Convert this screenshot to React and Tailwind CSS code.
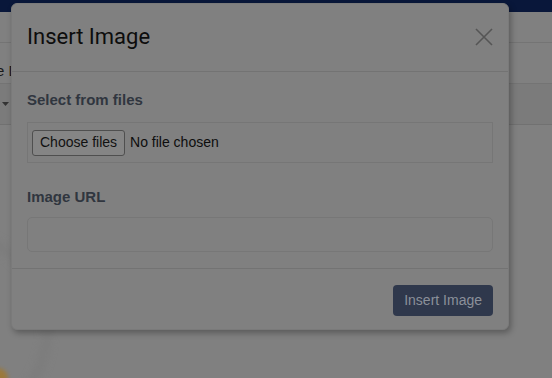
export default function App() {
  return (
    <div className="relative w-[552px] h-[378px] overflow-hidden bg-[#808080] font-['Liberation_Sans',Arial,sans-serif]">
      {/* page behind the dimmed backdrop */}
      <div className="h-[12px] bg-[#09173a]" />
      <div className="h-[31px] border-b border-[#747474]" />
      <div className="h-[41px] border-b border-[#747474] flex items-end pb-[5px]">
        <span className="text-[15px] text-[#1a1a1a] leading-none -ml-[4px]">e D</span>
      </div>
      <div className="h-[41px] border-b border-[#717171] bg-[#7b7b7b] flex items-center pl-[2px]">
        <svg width="7" height="4" viewBox="0 0 7 4"><path d="M0 0h7L3.5 4z" fill="#333" /></svg>
      </div>
      <div className="absolute -left-[12px] top-[368px] w-[20px] h-[20px] rounded-full bg-[#a8761e] blur-[2px] opacity-70" />
      <div className="absolute -left-[150px] top-[230px] w-[200px] h-[200px] rounded-full border-[6px] border-[#7a7a7a] blur-[4px]" />

      {/* modal */}
      <div className="absolute left-[11px] top-[3px] w-[498px] rounded-[6px] bg-[#808080] shadow-[2px_3px_6px_rgba(0,0,0,0.3)] border border-[#7a7a7a]">
        <div className="h-[68px] flex items-center justify-between pl-[15px] pr-[15px] border-b border-[#737373]">
          <h2 className="text-[22px] text-[#0d0d0d] font-['Roboto','Liberation_Sans',sans-serif] leading-none -mt-[1px]">Insert Image</h2>
          <svg width="18" height="18" viewBox="0 0 18 18" className="-mt-[2px]">
            <path d="M1 1L17 17M17 1L1 17" stroke="#555" strokeWidth="1.6" />
          </svg>
        </div>
        <div className="px-[15px] pt-[20px] pb-[16px]">
          <div className="text-[15px] font-bold text-[#30363f] leading-none">Select from files</div>
          <div className="mt-[15px] h-[41px] border border-[#767676] flex items-center pl-[4px] gap-[5px]">
            <div className="h-[26px] px-[7px] flex items-center bg-[#858585] border border-[#4f4f4f] rounded-[3px] text-[14px] text-[#111]">Choose files</div>
            <span className="text-[14px] text-[#0d0d0d]">No file chosen</span>
          </div>
          <div className="mt-[26px] text-[15px] font-bold text-[#30363f] leading-none">Image URL</div>
          <div className="mt-[13px] h-[35px] border border-[#777] rounded-[5px]" />
        </div>
        <div className="border-t border-[#737373] h-[61px] flex items-start pt-[16px] justify-end pr-[15px]">
          <div className="h-[31px] px-[11px] flex items-center bg-[#2f384c] rounded-[4px] text-[14px] text-[#8b909a]">Insert Image</div>
        </div>
      </div>
    </div>
  );
}
